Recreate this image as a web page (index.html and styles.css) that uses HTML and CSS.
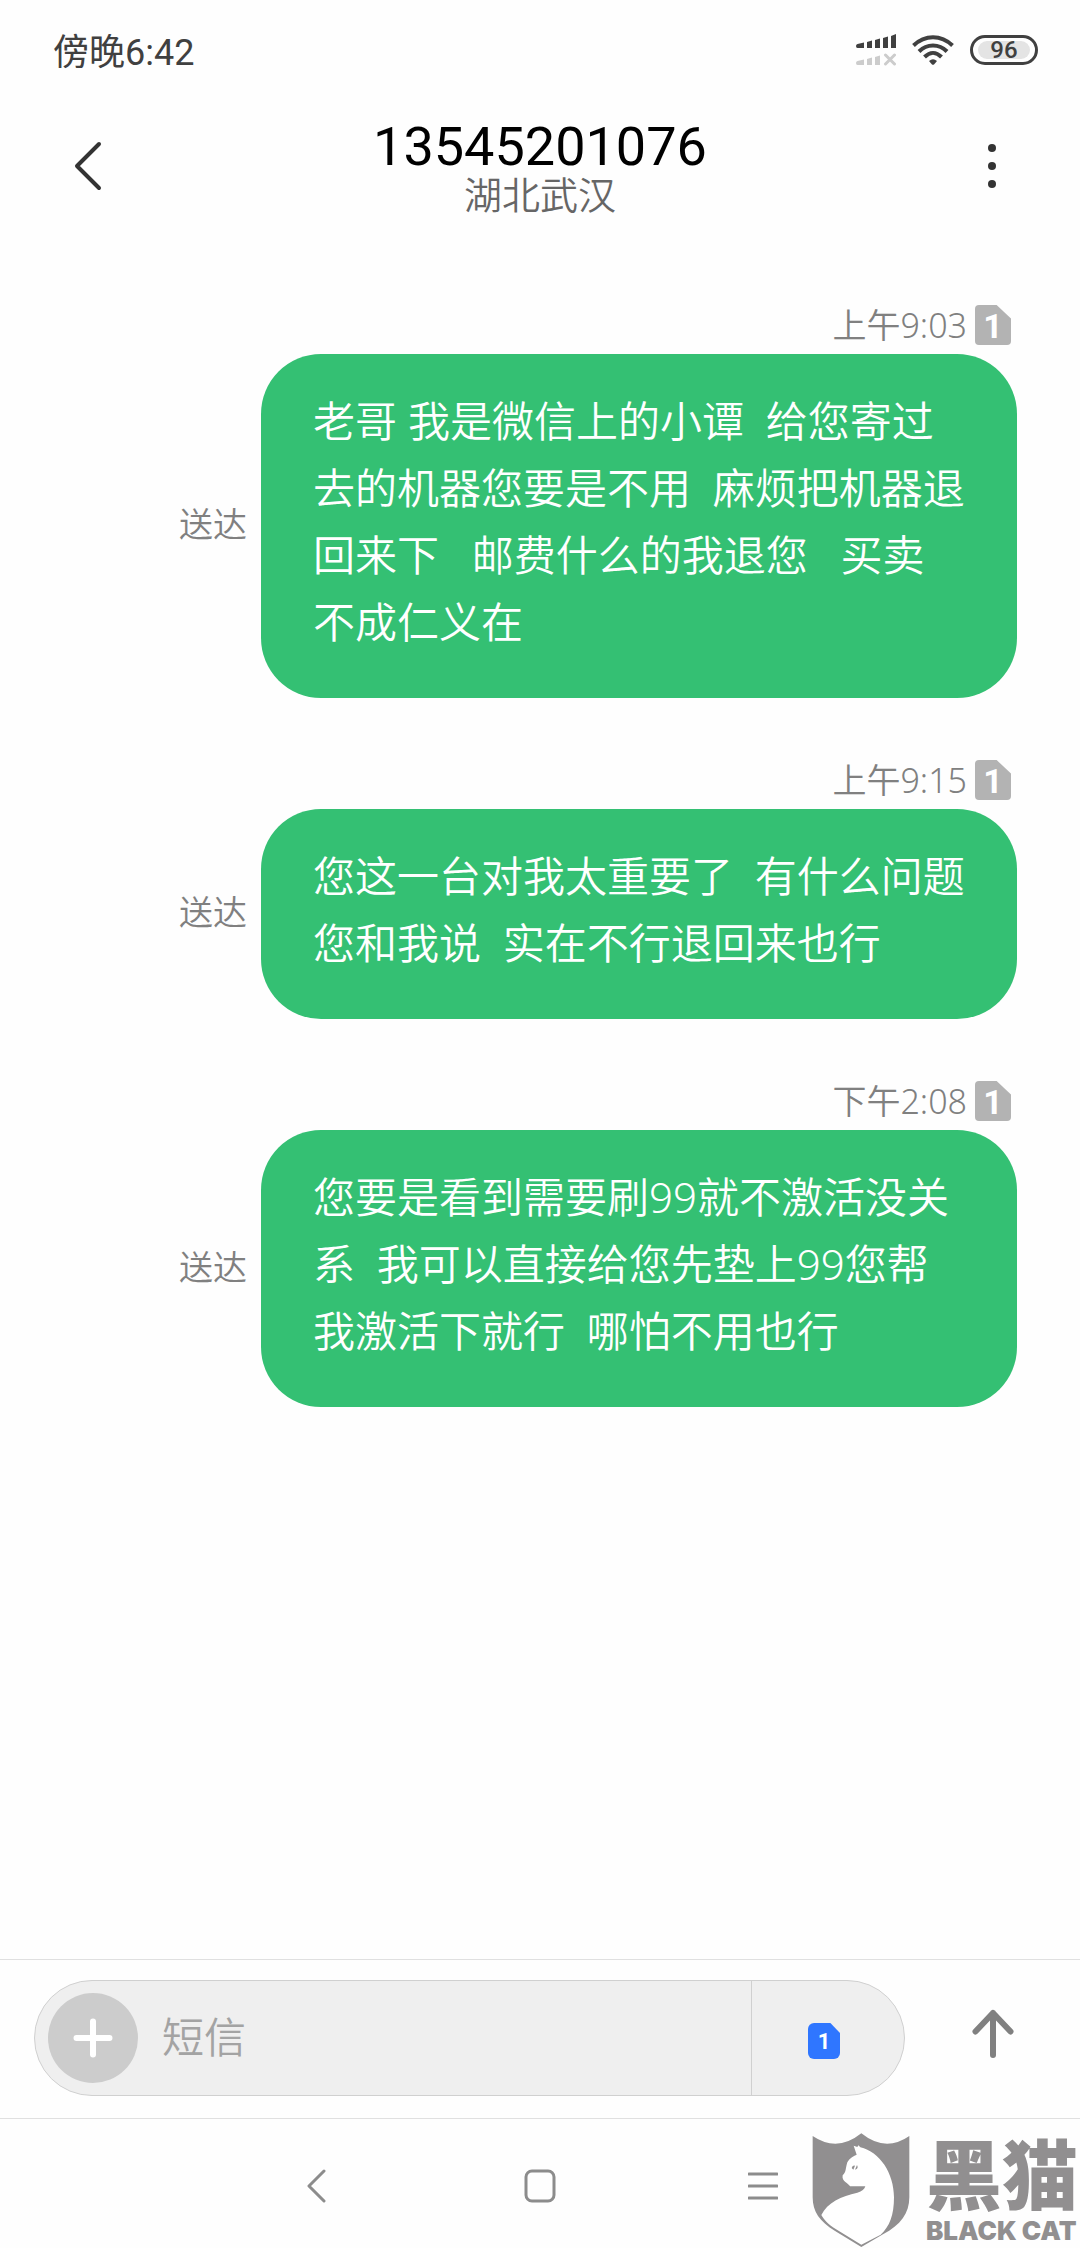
FILE: index.html
```html
<!DOCTYPE html>
<html lang="zh-CN">
<head>
  <meta charset="UTF-8" />
  <meta name="viewport" content="width=device-width, initial-scale=1.0" />
  <title>13545201076 – 短信</title>
  <link rel="stylesheet" href="styles.css">
</head>
<body>
  <div class="status-bar">
    <span class="clock">傍晚6:42</span>
    <div class="status-icons">
      <svg width="40" height="32" viewBox="0 0 40 32">
        <g fill="#404040">
          <path d="M0 12 Q0 10.500 1.500 10 L8 8.500 V14 H1.500 Q0 14 0 12Z" />
          <path d="M11 8 L16 6.500 V14 H11Z" />
          <path d="M19 6 L24 4.500 V14 H19Z" />
          <path d="M27 4 L32 2.500 V14 H27Z" />
          <path d="M35 2 L40 0 V14 H35Z" />
        </g>
        <g fill="#ccc">
          <path d="M0 29 Q0 27.500 1.500 27 L8 25.500 V31 H1.500 Q0 31 0 29Z" />
          <path d="M11 25 L16 23.500 V31 H11Z" />
          <path d="M19 23 L24 21.500 V31 H19Z" />
        </g>
        <path d="M29.500 21 L38.500 30 M38.500 21 L29.500 30" stroke="#ccc" stroke-width="3" stroke-linecap="round" />
      </svg>
      <svg width="42" height="30" viewBox="0 0 42 30">
        <g fill="none" stroke="#404040" stroke-width="4">
          <path d="M1.500 10.500 C13 -0.500 29 -0.500 40.500 10.500" />
          <path d="M7 16.500 C15 8.500 27 8.500 35 16.500" />
          <path d="M12.500 22 C18 16.500 24 16.500 29.500 22" />
        </g>
        <path d="M17 26 Q21 22.500 25 26 L22 29.500 Q21 30 20 29.500Z" fill="#404040" />
      </svg>
      <div class="battery"><span>96</span></div>
    </div>
  </div>

  <header class="header">
    <button class="icon-btn" aria-label="返回">
      <svg width="32" height="52" viewBox="0 0 32 52"><path d="M27 4 L5 26 L27 48" fill="none" stroke="#333" stroke-width="4" stroke-linecap="round" stroke-linejoin="round" /></svg>
    </button>
    <div class="contact">
      <h1>13545201076</h1>
      <p>湖北武汉</p>
    </div>
    <button class="icon-btn" aria-label="更多">
      <svg width="8" height="44" viewBox="0 0 8 44" fill="#333"><circle cx="4" cy="4" r="4" /><circle cx="4" cy="22" r="4" /><circle cx="4" cy="40" r="4" /></svg>
    </button>
  </header>

  <main class="messages">
    <article class="message">
      <div class="meta"><time>上午9:03</time><span class="sim">1</span></div>
      <div class="row">
        <span class="state">送达</span>
        <p class="bubble">老哥 我是微信上的小谭  给您寄过
去的机器您要是不用  麻烦把机器退
回来下   邮费什么的我退您   买卖
不成仁义在</p>
      </div>
    </article>
    <article class="message">
      <div class="meta"><time>上午9:15</time><span class="sim">1</span></div>
      <div class="row">
        <span class="state">送达</span>
        <p class="bubble">您这一台对我太重要了  有什么问题
您和我说  实在不行退回来也行</p>
      </div>
    </article>
    <article class="message">
      <div class="meta"><time>下午2:08</time><span class="sim">1</span></div>
      <div class="row">
        <span class="state">送达</span>
        <p class="bubble">您要是看到需要刷99就不激活没关
系  我可以直接给您先垫上99您帮
我激活下就行  哪怕不用也行</p>
      </div>
    </article>
  </main>

  <form class="composer">
    <div class="field">
      <button type="button" class="add-btn" aria-label="添加附件">
        <svg width="40" height="40" viewBox="0 0 40 40"><path d="M20 3.500 V36.500 M3.500 20 H36.500" stroke="#fff" stroke-width="6" stroke-linecap="round" /></svg>
      </button>
      <input type="text" placeholder="短信" aria-label="短信">
      <button type="button" class="sim-btn" aria-label="选择SIM卡"><span class="sim sim-active">1</span></button>
    </div>
    <button type="submit" class="send-btn" aria-label="发送">
      <svg width="42" height="50" viewBox="0 0 42 50"><path d="M21 46 V4 M3.500 22.500 L21 4 L38.500 22.500" fill="none" stroke="#808080" stroke-width="6" stroke-linecap="round" stroke-linejoin="round" /></svg>
    </button>
  </form>

  <nav class="nav-bar">
    <button aria-label="后退">
      <svg width="20" height="34" viewBox="0 0 20 34"><path d="M17 2 L2 17 L17 32" fill="none" stroke="#8c8c8c" stroke-width="3" stroke-linecap="round" stroke-linejoin="round" /></svg>
    </button>
    <button aria-label="主页">
      <svg width="32" height="34" viewBox="0 0 32 34"><rect x="2" y="2" width="28" height="30" rx="6" fill="none" stroke="#8c8c8c" stroke-width="3" /></svg>
    </button>
    <button aria-label="任务">
      <svg width="30" height="28" viewBox="0 0 30 28"><path d="M1 2 H29 M1 14 H29 M1 26 H29" stroke="#8c8c8c" stroke-width="3" stroke-linecap="round" /></svg>
    </button>
  </nav>

  <div class="watermark">
    <svg width="98" height="116" viewBox="62 66 294 348">
      <path d="M64 78 Q138 128 210 70 Q282 128 354 78 V262 C354 310 328 345 275 373 L210 411 L130 362 C85 335 64 305 64 262Z" fill="#918f90" />
      <path d="M187 107 L198 111 L201 106 L207 112 C265 125 308 190 308 262 C308 315 295 350 268 374 L210 404 L133 357 C110 342 98 330 90 315 C108 278 150 258 198 248 C212 244 220 237 222 229 L176 229 C172 220 150 215 154 196 C165 187 162 175 168 157 C176 142 188 138 196 134Z" fill="#fff" />
      <path d="M181 174 Q184 165 191 167 L186 179Z M191 179 L197 165 Q203 176 191 179Z" fill="#918f90" />
    </svg>
    <div class="brand">
      <strong>黑猫</strong>
      <span>BLACK CAT</span>
    </div>
  </div>
</body>
</html>
```

FILE: styles.css
```css
* { box-sizing: border-box; }
body {
  margin: 0;
  min-height: 100vh;
  display: flex;
  flex-direction: column;
  position: relative;
  background: #fefefe;
  font-family: Roboto, "Noto Sans CJK SC", sans-serif;
}
h1, p { margin: 0; }
button {
  display: flex;
  align-items: center;
  justify-content: center;
  padding: 0;
  border: none;
  background: none;
  font-family: inherit;
  cursor: pointer;
}
svg { display: block; flex: none; }

/* status bar */
.status-bar {
  display: flex;
  align-items: center;
  justify-content: space-between;
  height: 100px;
  padding: 0 42px 0 53px;
}
.clock {
  padding-top: 6px;
  color: #404040;
  font-size: 36px;
  line-height: 44px;
}
.status-icons { display: flex; align-items: center; gap: 16px; }
.battery {
  width: 68px;
  height: 30px;
  padding: 3px 5px;
  border: 3px solid #404040;
  border-radius: 15px;
}
.battery span {
  display: block;
  border-radius: 9px;
  background: #e4e4e4;
  color: #404040;
  font-size: 24px;
  font-weight: 500;
  line-height: 18px;
  text-align: center;
}

/* header */
.header {
  display: flex;
  align-items: center;
  height: 132px;
  padding: 0 40px;
}
.icon-btn { width: 96px; height: 96px; }
.contact { flex: 1; padding-top: 6px; text-align: center; }
.contact h1 {
  font-size: 54px;
  font-weight: 400;
  line-height: 54px;
  color: #000;
}
.contact p {
  font-size: 38px;
  font-weight: 350;
  line-height: 44px;
  color: #666;
}

/* messages */
.messages {
  flex: 1;
  display: flex;
  flex-direction: column;
  gap: 62px;
  padding: 73px 63px 62px 40px;
  font-family: "Noto Sans", "Noto Sans CJK SC", sans-serif;
}
.meta {
  display: flex;
  align-items: center;
  justify-content: flex-end;
  gap: 8px;
  margin-bottom: 9px;
  padding-right: 6px;
  font-size: 34px;
  font-weight: 350;
  line-height: 40px;
  color: #808080;
}
.sim {
  width: 36px;
  height: 40px;
  border-radius: 4px;
  background: #b3b3b3;
  color: #fff;
  font-family: Roboto, sans-serif;
  font-size: 34px;
  font-weight: 700;
  line-height: 42px;
  text-align: center;
  clip-path: polygon(0 0, 60% 0, 100% 34%, 100% 100%, 0 100%);
}
.row {
  display: flex;
  align-items: center;
  justify-content: flex-end;
  gap: 14px;
}
.state {
  padding-bottom: 4px;
  color: #808080;
  font-size: 34px;
  font-weight: 350;
  line-height: 40px;
}
.bubble {
  width: 70vw;
  padding: 33px 36px 43px 52px;
  border-radius: 60px;
  background: #34c073;
  color: #fff;
  font-size: 42px;
  font-weight: 350;
  line-height: 67px;
  white-space: pre-wrap;
}

/* composer */
.composer {
  display: flex;
  padding: 20px 0 22px 34px;
  border-top: 1px solid #e0e0e0;
}
.field {
  flex: 1;
  display: flex;
  align-items: center;
  height: 116px;
  padding-left: 13px;
  border: 1px solid #d0d0d0;
  border-radius: 58px;
  background: #efefef;
}
.add-btn {
  width: 90px;
  height: 90px;
  border-radius: 50%;
  background: #ccc;
}
.field input {
  flex: 1;
  min-width: 0;
  padding: 0 24px;
  border: none;
  outline: none;
  background: none;
  font: 350 42px Roboto, "Noto Sans CJK SC", sans-serif;
}
.field input::placeholder { color: #a3a3a3; }
.sim-btn {
  align-self: stretch;
  width: 153px;
  padding: 6px 8px 0 0;
  border-left: 1px solid #d0d0d0;
}
.sim-active {
  width: 32px;
  height: 36px;
  border-radius: 6px;
  background: #2f76ff;
  font-size: 22px;
  line-height: 38px;
  clip-path: polygon(0 0, 70% 0, 100% 28%, 100% 100%, 0 100%);
}
.send-btn { width: 175px; padding-bottom: 8px; }

/* system navigation */
.nav-bar {
  display: grid;
  grid-template-columns: repeat(3, 1fr);
  height: 130px;
  padding: 4px 19% 0;
  border-top: 1px solid #e0e0e0;
}

/* brand mark over the bottom corner */
.watermark {
  position: absolute;
  right: 2px;
  bottom: 0;
  display: flex;
  align-items: center;
  gap: 16px;
  color: #918f90;
}
.brand { padding-top: 6px; }
.brand strong {
  display: block;
  font-size: 76px;
  font-weight: 900;
  line-height: 76px;
}
.brand span {
  display: block;
  font-family: Inter, sans-serif;
  font-size: 26px;
  font-weight: 900;
  line-height: 30px;
}
```
